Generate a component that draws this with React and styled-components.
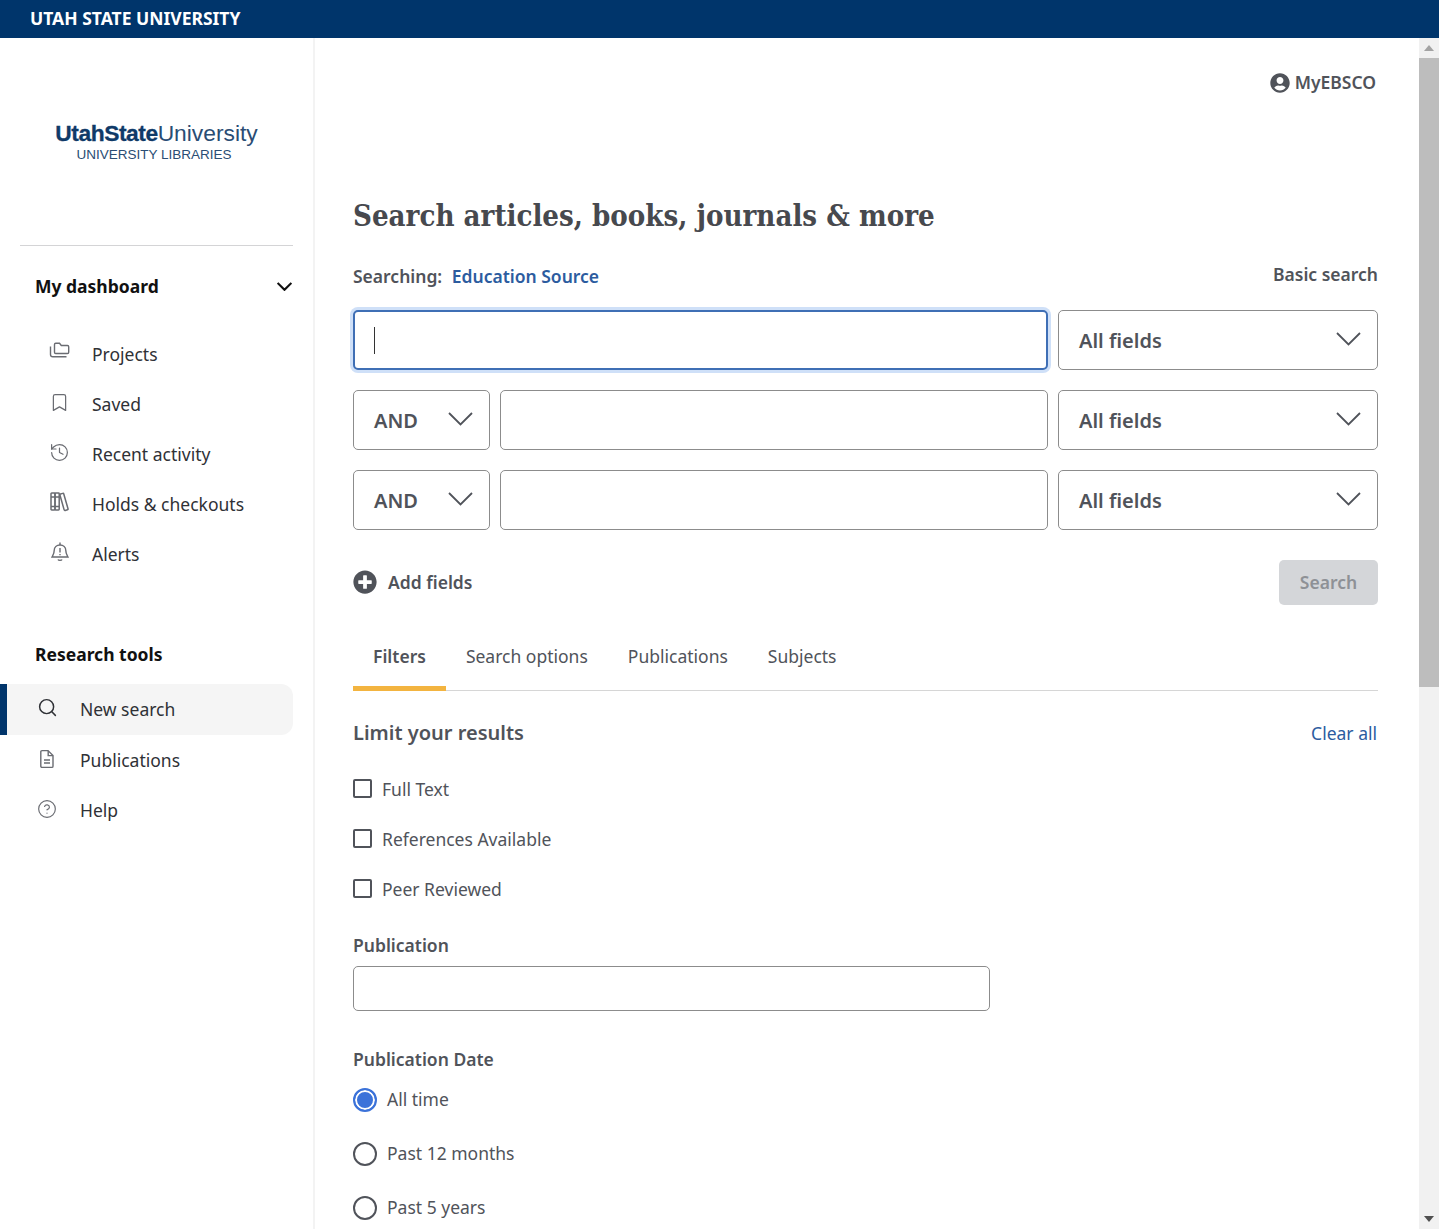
import { styled, createGlobalStyle } from 'styled-components';
import { Bookmark, History, Search, CircleHelp } from 'lucide-react';
import { FaUserCircle, FaPlusCircle } from 'react-icons/fa';

const GlobalStyle = createGlobalStyle`
  html, body {
    margin: 0;
    height: 100%;
    overflow: hidden;
    background: #fff;
  }
  body {
    font-family: "Noto Sans", "Open Sans", sans-serif;
    font-size: 17.5px;
    color: #50535a;
  }
`;

const FolderIcon = () => (
  <svg width='22' height='22' viewBox='0 0 22 22' fill='none' stroke='currentColor' strokeWidth='1.4'>
    <path d='M5.5 5V3.500c0-.7.5-1.200 1.200-1.200h3.800l1.800 2.200h6.200c.7 0 1.200.5 1.200 1.200v5.600c0 .7-.5 1.200-1.200 1.200H6.700c-.7 0-1.200-.5-1.200-1.200z' />
    <path d='M1.500 5.500v8c0 1.400 1 2.300 2.300 2.300h13.700' />
  </svg>
);

const BooksIcon = () => (
  <svg width='22' height='22' viewBox='0 0 22 22' fill='none' stroke='currentColor' strokeWidth='1.5'>
    <rect x='2' y='2' width='4' height='17' rx='.7' />
    <rect x='6' y='2' width='4.200' height='17' rx='.7' />
    <rect x='13' y='2.400' width='4' height='17' rx='.8' transform='rotate(-16 15 11)' />
    <path d='M2 6h8.200M2 15.500h8.200' />
  </svg>
);

const BellIcon = () => (
  <svg width='22' height='22' viewBox='0 0 22 22' fill='none' stroke='currentColor' strokeWidth='1.4'>
    <path d='M5.200 9.500c0-3.200 2.500-5.500 5.800-5.500s5.800 2.300 5.800 5.500c0 3.600 1.700 5.300 2.200 6.500H3c.5-1.200 2.200-2.900 2.200-6.500z' />
    <path d='M11 1.500V4M9 18.500c.5 1.200 3.500 1.200 4 0M11 7v4.600M11 13v1.200' />
  </svg>
);

const DocIcon = () => (
  <svg width='20' height='20' viewBox='0 0 20 20' fill='none' stroke='currentColor' strokeWidth='1.4'>
    <path d='M3.800 2.800c0-.7.5-1.200 1.200-1.200h6l5 5v10.600c0 .7-.5 1.200-1.200 1.200H5c-.7 0-1.200-.5-1.200-1.200z' />
    <path d='M11.200 1.800v4.800H16M7 11h6M7 14h6' />
  </svg>
);

const Chevron = ({ width = 25, height = 14, stroke = 1.8 }) => (
  <svg width={width} height={height} viewBox='0 0 25 14' fill='none' stroke='currentColor' strokeWidth={stroke}>
    <path d='M1 1l11.500 11.500L24 1' />
  </svg>
);

const dashboardLinks = [
  { label: 'Projects', icon: <FolderIcon /> },
  { label: 'Saved', icon: <Bookmark size={21} strokeWidth={1.4} /> },
  { label: 'Recent activity', icon: <History size={21} strokeWidth={1.4} /> },
  { label: 'Holds & checkouts', icon: <BooksIcon /> },
  { label: 'Alerts', icon: <BellIcon /> },
];

const toolLinks = [
  { label: 'New search', icon: <Search size={21} strokeWidth={1.7} />, active: true },
  { label: 'Publications', icon: <DocIcon /> },
  { label: 'Help', icon: <CircleHelp size={20} strokeWidth={1.4} /> },
];

const tabs = ['Filters', 'Search options', 'Publications', 'Subjects'];
const limits = ['Full Text', 'References Available', 'Peer Reviewed'];
const dates = ['All time', 'Past 12 months', 'Past 5 years'];

const App = () => {
  return (
    <Page>
      <GlobalStyle />
      <TopBar>UTAH STATE UNIVERSITY</TopBar>
      <Body>
        <Sidebar>
          <Logo>
            <LogoLine>
              <b>UtahState</b>University
            </LogoLine>
            <LogoSub>UNIVERSITY LIBRARIES</LogoSub>
          </Logo>
          <SectionToggle>
            My dashboard
            <Chevron width={15} height={9} stroke={3.600} />
          </SectionToggle>
          <DashboardNav>
            {dashboardLinks.map((link) => (
              <DashboardLink key={link.label}>
                <NavIcon>{link.icon}</NavIcon>
                {link.label}
              </DashboardLink>
            ))}
          </DashboardNav>
          <SectionTitle>Research tools</SectionTitle>
          <nav>
            {toolLinks.map((link) => (
              <ToolLink key={link.label} $active={link.active}>
                <ToolIcon $active={link.active}>{link.icon}</ToolIcon>
                {link.label}
              </ToolLink>
            ))}
          </nav>
        </Sidebar>
        <Main>
          <AccountRow>
            <FaUserCircle size={20} />
            MyEBSCO
          </AccountRow>
          <Heading>Search articles, books, journals &amp; more</Heading>
          <SearchingRow>
            <Searching>
              Searching: <a>Education Source</a>
            </Searching>
            <BasicSearch>Basic search</BasicSearch>
          </SearchingRow>
          <FieldRow>
            <TextBox $focused>
              <Caret />
            </TextBox>
            <Select $wide>
              All fields
              <Chevron />
            </Select>
          </FieldRow>
          {[0, 1].map((n) => (
            <FieldRow key={n}>
              <Select>
                AND
                <Chevron />
              </Select>
              <TextBox />
              <Select $wide>
                All fields
                <Chevron />
              </Select>
            </FieldRow>
          ))}
          <ActionRow>
            <AddFields>
              <FaPlusCircle size={24} />
              Add fields
            </AddFields>
            <SearchButton disabled>Search</SearchButton>
          </ActionRow>
          <Tabs>
            {tabs.map((tab, i) => (
              <Tab key={tab} $active={i === 0}>
                {tab}
              </Tab>
            ))}
          </Tabs>
          <LimitHeader>
            <LimitTitle>Limit your results</LimitTitle>
            <ClearAll>Clear all</ClearAll>
          </LimitHeader>
          <CheckList>
            {limits.map((limit) => (
              <CheckRow key={limit}>
                <CheckBox />
                {limit}
              </CheckRow>
            ))}
          </CheckList>
          <FieldLabel>Publication</FieldLabel>
          <PublicationInput />
          <DateLabel>Publication Date</DateLabel>
          {dates.map((date, i) => (
            <RadioRow key={date}>
              <Radio $checked={i === 0} />
              {date}
            </RadioRow>
          ))}
        </Main>
        <Scrollbar>
          <ScrollArrow>
            <svg width='10' height='6' viewBox='0 0 10 6'>
              <path d='M5 0l5 6H0z' fill='#a3a3a3' />
            </svg>
          </ScrollArrow>
          <ScrollThumb />
          <ScrollSpace />
          <ScrollArrow>
            <svg width='10' height='6' viewBox='0 0 10 6'>
              <path d='M5 6l5-6H0z' fill='#505050' />
            </svg>
          </ScrollArrow>
        </Scrollbar>
      </Body>
    </Page>
  );
};

const Page = styled.div`
  height: 1229px;
  display: flex;
  flex-direction: column;
  overflow: hidden;
`;

const TopBar = styled.header`
  height: 38px;
  flex: none;
  padding-left: 30px;
  background: #00356b;
  color: #fff;
  font-weight: 700;
  font-size: 17.5px;
  line-height: 37px;
`;

const Body = styled.div`
  flex: 1;
  display: flex;
  min-height: 0;
`;

const Sidebar = styled.aside`
  width: 313px;
  flex: none;
  border-right: 2px solid #f3f3f3;
  color: #2f3136;
`;

const Logo = styled.div`
  height: 207px;
  margin: 0 20px;
  border-bottom: 1px solid #d4d4d6;
  display: flex;
  flex-direction: column;
  align-items: center;
  font-family: "Liberation Sans", Arial, sans-serif;
  color: #2a4d74;
`;

const LogoLine = styled.div`
  margin-top: 82px;
  font-size: 22.800px;
  line-height: 26px;
  b {
    font-weight: 700;
    letter-spacing: -0.45px;
    color: #0f3a68;
    -webkit-text-stroke: 0.3px #0f3a68;
  }
`;

const LogoSub = styled.div`
  font-size: 13.500px;
  line-height: 16px;
  margin: 1px 5px 0 0;
`;

const SectionToggle = styled.div`
  display: flex;
  align-items: center;
  justify-content: space-between;
  height: 24px;
  margin: 28px 21px 0 35px;
  font-weight: 700;
  color: #111;
`;

const DashboardNav = styled.nav`
  margin-top: 32px;
`;

const DashboardLink = styled.a`
  display: flex;
  align-items: center;
  box-sizing: border-box;
  height: 50px;
  padding: 0 0 2px 49px;
`;

const NavIcon = styled.span`
  width: 43px;
  display: flex;
  margin-top: -4px;
  color: #6a6c72;
`;

const SectionTitle = styled.div`
  margin: 62px 0 18px 35px;
  line-height: 24px;
  font-weight: 700;
  color: #111;
`;

const ToolLink = styled.a`
  display: flex;
  align-items: center;
  box-sizing: border-box;
  height: ${({ $active }) => ($active ? '51px' : '50px')};
  width: ${({ $active }) => ($active ? '293px' : 'auto')};
  padding: ${({ $active }) => ($active ? '0 0 2px 30px' : '0 0 0 37px')};
  border-left: ${({ $active }) => ($active ? '7px solid #00356b' : 'none')};
  border-radius: 0 12px 12px 0;
  background: ${({ $active }) => ($active ? '#f5f5f5' : 'transparent')};
`;

const ToolIcon = styled.span`
  width: 43px;
  display: flex;
  margin-top: -3px;
  color: ${({ $active }) => ($active ? '#2f3136' : '#6a6c72')};
`;

const Main = styled.main`
  flex: 1;
  min-width: 0;
  padding: 0 41px 0 38px;
`;

const AccountRow = styled.div`
  display: flex;
  justify-content: flex-end;
  align-items: center;
  gap: 5px;
  box-sizing: border-box;
  height: 24px;
  margin: 33px 2px 0 0;
  padding-bottom: 2px;
  font-weight: 600;
  svg {
    margin-top: 2px;
  }
`;

const Heading = styled.h1`
  margin: 101px 0 0;
  font-family: "DejaVu Serif Condensed", "DejaVu Serif", "Liberation Serif", serif;
  font-stretch: condensed;
  font-weight: 700;
  font-size: 29.150px;
  line-height: 40px;
  color: #47494e;
`;

const SearchingRow = styled.div`
  display: flex;
  justify-content: space-between;
  align-items: flex-start;
  height: 24px;
  margin: 26px 0 24px;
  font-weight: 600;
`;

const Searching = styled.div`
  margin-top: 2px;
  a {
    margin-left: 5px;
    color: #2c5c9f;
  }
`;

const BasicSearch = styled.a``;

const FieldRow = styled.div`
  display: flex;
  gap: 10px;
  height: 60px;
  margin-bottom: 20px;
`;

const TextBox = styled.div`
  flex: 1;
  display: flex;
  align-items: center;
  padding-left: 19px;
  border: ${({ $focused }) => ($focused ? '2px solid #3f6fb5' : '1px solid #8c8c8c')};
  border-radius: 5px;
  background: #fff;
  box-shadow: ${({ $focused }) => ($focused ? '0 0 0 3px #cfe0f8' : 'none')};
`;

const Caret = styled.span`
  width: 1px;
  height: 27px;
  background: #333;
`;

const Select = styled.div`
  width: ${({ $wide }) => ($wide ? '320px' : '137px')};
  flex: none;
  box-sizing: border-box;
  display: flex;
  align-items: center;
  justify-content: space-between;
  padding: 0 16px 0 20px;
  border: 1px solid #8c8c8c;
  border-radius: 5px;
  font-size: 20px;
  font-weight: 600;
  svg {
    margin-top: -3px;
  }
`;

const ActionRow = styled.div`
  display: flex;
  justify-content: space-between;
  align-items: center;
  height: 45px;
  margin-top: 30px;
`;

const AddFields = styled.a`
  display: flex;
  align-items: center;
  gap: 11px;
  padding-bottom: 2px;
  font-weight: 600;
`;

const SearchButton = styled.button`
  width: 99px;
  height: 45px;
  padding: 0 0 2px;
  border: none;
  border-radius: 5px;
  background: #d4d6d9;
  color: #8e9196;
  font: 600 17.5px "Noto Sans", sans-serif;
`;

const Tabs = styled.div`
  display: flex;
  height: 65px;
  margin-top: 20px;
  border-bottom: 1px solid #d6d6d6;
`;

const Tab = styled.a`
  padding: 19px 20px 0;
  height: 66px;
  box-sizing: border-box;
  font-weight: ${({ $active }) => ($active ? 600 : 400)};
  border-bottom: 5px solid ${({ $active }) => ($active ? '#f3b440' : 'transparent')};
`;

const LimitHeader = styled.div`
  display: flex;
  justify-content: space-between;
  align-items: center;
  height: 30px;
  margin: 26px 1px 0 0;
`;

const LimitTitle = styled.h2`
  margin: 0;
  font-size: 20px;
  font-weight: 600;
`;

const ClearAll = styled.a`
  margin-top: 2px;
  color: #2c5c9f;
`;

const CheckList = styled.div`
  margin-top: 18px;
`;

const CheckRow = styled.label`
  display: flex;
  align-items: center;
  gap: 10px;
  box-sizing: border-box;
  height: 50px;
  padding-bottom: 2px;
`;

const CheckBox = styled.span`
  width: 15px;
  height: 15px;
  margin-top: -1px;
  border: 2px solid #50535a;
  border-radius: 2px;
`;

const FieldLabel = styled.div`
  margin-top: 18px;
  line-height: 24px;
  font-weight: 600;
`;

const PublicationInput = styled.div`
  width: 637px;
  height: 45px;
  box-sizing: border-box;
  margin-top: 9px;
  border: 1px solid #8c8c8c;
  border-radius: 5px;
`;

const DateLabel = styled(FieldLabel)`
  margin: 36px 0 2px;
`;

const RadioRow = styled.label`
  display: flex;
  align-items: center;
  gap: 10px;
  box-sizing: border-box;
  height: 54px;
  padding-bottom: 2px;
`;

const Radio = styled.span`
  width: 24px;
  height: 24px;
  box-sizing: border-box;
  margin-top: 2px;
  border-radius: 50%;
  border: 2px solid ${({ $checked }) => ($checked ? '#3b72d9' : '#50535a')};
  background: ${({ $checked }) => ($checked ? '#3b72d9' : '#fff')};
  box-shadow: ${({ $checked }) => ($checked ? 'inset 0 0 0 2px #fff' : 'none')};
`;

const Scrollbar = styled.div`
  width: 20px;
  flex: none;
  display: flex;
  flex-direction: column;
  background: #f1f1f1;
`;

const ScrollArrow = styled.div`
  height: 20px;
  display: flex;
  align-items: center;
  justify-content: center;
`;

const ScrollThumb = styled.div`
  height: 629px;
  background: #bdbdbd;
`;

const ScrollSpace = styled.div`
  flex: 1;
`;

export default App;
